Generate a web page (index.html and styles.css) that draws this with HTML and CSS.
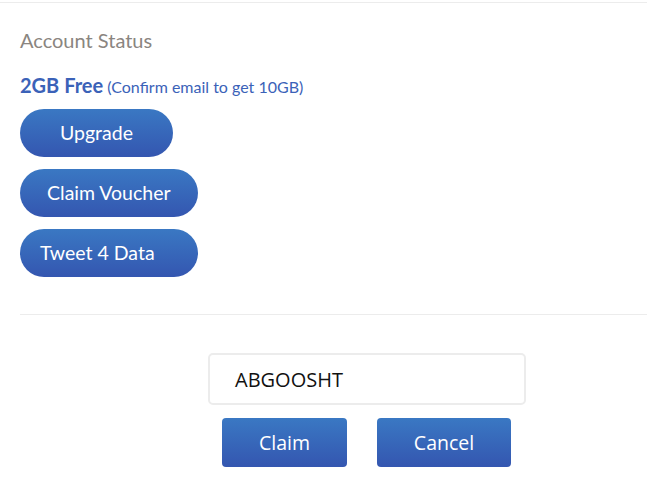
FILE: index.html
```html
<!DOCTYPE html>
<html>
<head>
<meta charset="utf-8">
<link rel="stylesheet" href="styles.css">
</head>
<body>
<div class="page">
  <section class="status">
    <h2 class="title">Account Status</h2>
    <p class="plan"><strong>2GB Free</strong> <span class="note">(Confirm email to get 10GB)</span></p>
    <div class="actions">
      <button class="pill pill-upgrade">Upgrade</button>
      <button class="pill pill-voucher">Claim Voucher</button>
      <button class="pill pill-tweet">Tweet 4 Data</button>
    </div>
  </section>
  <section class="voucher">
    <div class="field">ABGOOSHT</div>
    <div class="voucher-actions">
      <button class="btn btn-claim">Claim</button>
      <button class="btn btn-cancel">Cancel</button>
    </div>
  </section>
</div>
</body>
</html>
```
FILE: styles.css
```css
html, body {
  margin: 0;
  padding: 0;
  background: #ffffff;
}
body {
  font-family: Lato, "Open Sans", sans-serif;
  width: 647px;
  height: 500px;
  overflow: hidden;
}
.page {
  padding-top: 2px;
}
.status {
  border-top: 1px solid #ececec;
  padding: 0 0 0 20px;
}
.title {
  margin: 0;
  padding-top: 25px;
  font-size: 20px;
  font-weight: 400;
  line-height: 24px;
  color: #8a8580;
}
.plan {
  margin: 21px 0 0 0;
  line-height: 24px;
  color: #3b62b8;
}
.plan strong {
  font-size: 20px;
  font-weight: 700;
}
.note {
  font-size: 16px;
}
.actions {
  display: flex;
  flex-direction: column;
  align-items: flex-start;
  gap: 12px;
  margin-top: 10px;
  padding-bottom: 37px;
  border-bottom: 1px solid #ececec;
}
.pill {
  height: 48px;
  border: none;
  border-radius: 24px;
  background: linear-gradient(to bottom, #3a78c3, #3456b0);
  color: #ffffff;
  font-family: Lato, sans-serif;
  font-size: 19.5px;
  font-weight: 400;
  text-align: left;
  padding: 0 0 2px 0;
  margin: 0;
}
.pill-upgrade {
  width: 153px;
  padding-left: 40px;
}
.pill-voucher {
  width: 178px;
  padding-left: 27px;
}
.pill-tweet {
  width: 178px;
  padding-left: 20px;
}
.voucher {
  padding: 38px 0 0 208px;
}
.field {
  box-sizing: border-box;
  width: 318px;
  height: 52px;
  border: 2px solid #ececec;
  border-radius: 5px;
  padding-left: 25px;
  display: flex;
  align-items: center;
  font-family: "Open Sans", sans-serif;
  font-size: 20px;
  color: #111111;
}
.voucher-actions {
  display: flex;
  gap: 30px;
  margin-top: 13px;
  padding-left: 14px;
}
.btn {
  height: 49px;
  border: none;
  border-radius: 4px;
  background: linear-gradient(to bottom, #3a78c3, #3456b0);
  color: #ffffff;
  font-family: "Open Sans", sans-serif;
  font-size: 19.5px;
  padding: 0;
  margin: 0;
}
.btn-claim {
  width: 125px;
}
.btn-cancel {
  width: 134px;
}
```
